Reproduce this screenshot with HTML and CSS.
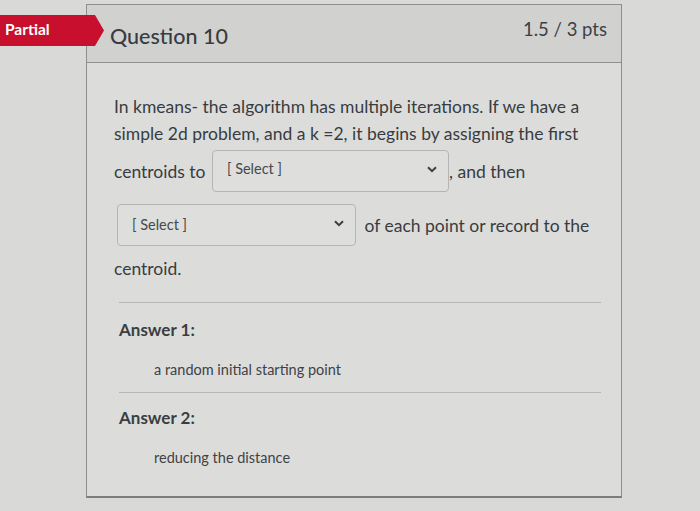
FILE: index.html
```html
<!DOCTYPE html>
<html>
<head>
<meta charset="utf-8">
<link rel="stylesheet" href="styles.css">
</head>
<body>
<div class="badge">Partial</div>
<div class="card">
  <div class="card-header">
    <h2 class="q-title">Question 10</h2>
    <span class="q-points">1.5 / 3 pts</span>
  </div>
  <div class="card-body">
    <p class="q-text">In kmeans- the algorithm has multiple iterations. If we have a simple 2d problem, and a k =2, it begins by assigning the first centroids to <span class="select sel-1"><span class="sel-label">[ Select ]</span><svg class="chev" viewBox="0 0 10 7" width="10" height="7"><path d="M1 1.2 L5 5.2 L9 1.2" fill="none" stroke="#3a3e42" stroke-width="2"/></svg></span>, and then <span class="select sel-2"><span class="sel-label">[ Select ]</span><svg class="chev" viewBox="0 0 10 7" width="10" height="7"><path d="M1 1.2 L5 5.2 L9 1.2" fill="none" stroke="#3a3e42" stroke-width="2"/></svg></span> of each point or record to the centroid.</p>
    <div class="answers">
      <div class="answer">
        <div class="answer-label">Answer 1:</div>
        <div class="answer-text">a random initial starting point</div>
      </div>
      <div class="answer">
        <div class="answer-label">Answer 2:</div>
        <div class="answer-text">reducing the distance</div>
      </div>
    </div>
  </div>
</div>
</body>
</html>
```
FILE: styles.css
```css
html, body {
  margin: 0;
  padding: 0;
}
body {
  background: #d9dad8;
  font-family: Lato, "Noto Sans", sans-serif;
  color: #3b3f43;
  width: 700px;
  height: 511px;
  overflow: hidden;
  position: relative;
}
.badge {
  position: absolute;
  left: 0;
  top: 15px;
  width: 104px;
  height: 31px;
  background: #c8102e;
  clip-path: polygon(0 0, 95px 0, 104px 50%, 95px 100%, 0 100%);
  color: #fff;
  font-weight: 700;
  font-size: 15.5px;
  line-height: 29px;
  padding-left: 5px;
  box-sizing: border-box;
}
.card {
  margin: 4px 0 0 86px;
  width: 536px;
  height: 494px;
  box-sizing: border-box;
  border: 1px solid #8d8f8d;
  border-bottom: 2px solid #7c7e7c;
  background: #dcdddb;
}
.card-header {
  height: 58px;
  box-sizing: border-box;
  background: #d1d2d0;
  border-bottom: 1px solid #8f918f;
  display: flex;
  justify-content: space-between;
  align-items: center;
  padding: 0 14px 0 23px;
}
.q-title {
  margin: 4px 0 0;
  font-size: 21.5px;
  font-weight: 500;
  color: #383c40;
}
.q-points {
  font-size: 18.5px;
  margin-bottom: 10px;
  color: #3d4145;
}
.card-body {
  padding: 30px 20px 0 27px;
}
.q-text {
  margin: 0;
  font-size: 17.5px;
  line-height: 27px;
  width: 488px;
  color: #383c40;
}
.select {
  display: inline-flex;
  align-items: center;
  justify-content: space-between;
  box-sizing: border-box;
  height: 42px;
  border: 1px solid #b5b6b4;
  border-radius: 4px;
  background: #dedfdd;
  vertical-align: middle;
  padding: 0 11px 0 14px;
  margin: 3px 0 9px;
}
.sel-1 {
  width: 237px;
  margin-left: 2px;
}
.sel-2 {
  width: 239px;
  margin-left: 3px;
  margin-right: 4px;
}
.sel-label {
  font-size: 14.5px;
  color: #45494d;
  margin-top: -6px;
}
.sel-2 .sel-label {
  margin-top: -2px;
}
.chev {
  margin-top: -4px;
}
.answers {
  margin: 20px 0 0 5px;
}
.answer {
  border-top: 1px solid #b7b8b6;
  padding: 16px 0 12px;
}
.answer + .answer {
  padding-top: 14px;
}
.answer-label {
  font-size: 17px;
  font-weight: 700;
  line-height: 22px;
  color: #3a3e42;
}
.answer-text {
  font-size: 14.5px;
  line-height: 20px;
  margin: 19px 0 0 35px;
  color: #3e4246;
}
```
